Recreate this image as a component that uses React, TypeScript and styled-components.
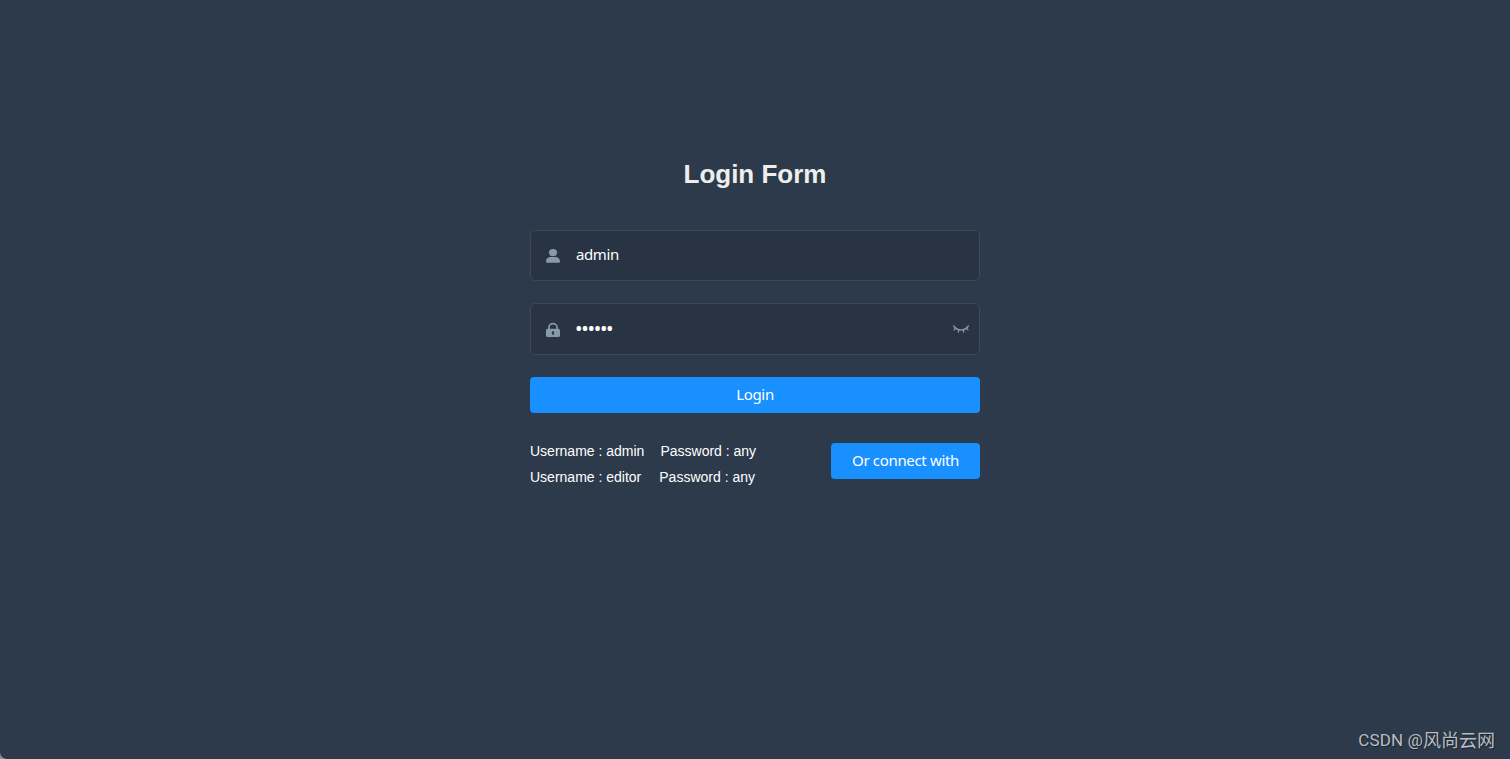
import { useState } from "react";
import styled, { createGlobalStyle } from "styled-components";

const bg = "#2d3a4b";
const iconGray = "#889aa4";
const primary = "#1890ff";
const uiFont = `"Noto Sans", "Open Sans", sans-serif`;

const GlobalStyle = createGlobalStyle`
  * { box-sizing: border-box; }
  body {
    margin: 0;
    background: linear-gradient(90deg, #8793a2 50%, #173a7c 50%);
    font-family: "Liberation Sans", Arial, sans-serif;
  }
`;

const Page = styled.div`
  position: relative;
  min-height: 100vh;
  overflow: hidden;
  background: ${bg};
  border-radius: 0 0 7px 7px;
`;

const LoginForm = styled.form`
  width: 450px;
  margin: 0 auto;
  padding-top: 159px;
`;

const Title = styled.h3`
  margin: 0 0 41px;
  color: #eee;
  font-size: 26px;
  line-height: 30px;
  font-weight: bold;
  text-align: center;
`;

const Field = styled.div<{ $height: number }>`
  display: flex;
  align-items: center;
  height: ${({ $height }) => $height}px;
  margin-bottom: 22px;
  padding: 0 10px 0 15px;
  border: 1px solid #3e4957;
  border-radius: 5px;
  background: #283443;

  svg { flex: none; display: block; }
`;

const Input = styled.input<{ $secret?: boolean }>`
  flex: 1;
  min-width: 0;
  height: 47px;
  margin-bottom: ${({ $secret }) => ($secret ? "1px" : "3px")};
  padding: 0 0 0 ${({ $secret }) => ($secret ? "15px" : "16px")};
  border: 0;
  outline: 0;
  background: transparent;
  color: #fff;
  font-family: ${uiFont};
  font-size: ${({ $secret }) => ($secret ? "20px" : "15px")};
  letter-spacing: ${({ $secret }) => ($secret ? "-1.3px" : "-0.4px")};
`;

const EyeButton = styled.button`
  padding: 0;
  border: 0;
  background: none;
  cursor: pointer;
`;

const Button = styled.button<{ $width: string }>`
  display: block;
  width: ${({ $width }) => $width};
  height: 36px;
  padding: 0 0 2px;
  border: 0;
  border-radius: 4px;
  background: ${primary};
  color: #fff;
  font-family: ${uiFont};
  font-size: 15px;
  line-height: 20px;
  letter-spacing: -0.33px;
  cursor: pointer;
`;

const Footer = styled.div`
  display: flex;
  justify-content: space-between;
  margin-top: 30px;
`;

const Tips = styled.div`
  color: #fff;
  font-size: 14px;
  line-height: 16px;
`;

const Tip = styled.div<{ $gap: number }>`
  display: flex;
  gap: ${({ $gap }) => $gap}px;
  margin-bottom: 10px;
`;

const Watermark = styled.div`
  position: absolute;
  right: 15px;
  bottom: 6px;
  display: flex;
  color: #b9bdc3;
  font-family: Roboto, "Noto Sans CJK SC", sans-serif;
  font-size: 17px;
  line-height: 26px;
  letter-spacing: 0.15px;
  white-space: nowrap;
  text-shadow: 1px 1px 1px rgba(0, 0, 0, 0.4);

  span {
    padding-top: 1px;
    font-size: 18px;
    letter-spacing: 0;
    line-height: 25px;
  }
`;

const UserIcon = () => (
  <svg width="14" height="14" viewBox="0 0 14 14" fill={iconGray}>
    <ellipse cx="7" cy="3.6" rx="4.1" ry="3.6" />
    <path d="M0 12.2C0 9.8 2 8 4.6 8h4.8C12 8 14 9.8 14 12.2c0 1-.6 1.6-1.6 1.6H1.6C.6 13.8 0 13.2 0 12.2z" />
  </svg>
);

const LockIcon = () => (
  <svg width="14" height="16" viewBox="0 -2 14 16">
    <path d="M2.9 6.5V4.6a4.1 3.9 0 0 1 8.2 0v1.9" fill="none" stroke={iconGray} strokeWidth="1.7" />
    <rect y="5.8" width="14" height="8.2" rx="1.6" fill={iconGray} />
    <path d="M7 8.2a1.3 1.3 0 0 1 .7 2.4v1.3H6.3v-1.3A1.3 1.3 0 0 1 7 8.2z" fill="#283443" />
  </svg>
);

const ClosedEye = () => (
  <svg width="16" height="9" viewBox="0 0 16 9" fill="none" stroke={iconGray} strokeWidth="1.3" strokeLinecap="round">
    <path d="M.6 1C2.4 3.5 5 4.9 8 4.9s5.6-1.4 7.4-3.9" />
    <path d="M2.6 3.1 1.1 4.900M5.9 4.7 5.3 7.200M10.1 4.7l.6 2.500M13.4 3.1l1.5 1.8" />
  </svg>
);

const App = () => {
  const [visible, setVisible] = useState(false);

  return (
    <>
      <GlobalStyle />
      <Page>
        <LoginForm onSubmit={(e) => e.preventDefault()}>
          <Title>Login Form</Title>
          <Field $height={51}>
            <UserIcon />
            <Input defaultValue="admin" aria-label="Username" spellCheck={false} />
          </Field>
          <Field $height={52}>
            <LockIcon />
            <Input $secret={!visible} type={visible ? "text" : "password"} defaultValue="111111" aria-label="Password" />
            <EyeButton type="button" aria-label="Show password" onClick={() => setVisible(!visible)}>
              <ClosedEye />
            </EyeButton>
          </Field>
          <Button $width="100%">Login</Button>
          <Footer>
            <Tips>
              <Tip $gap={16}>
                <span>Username : admin</span>
                <span>Password : any</span>
              </Tip>
              <Tip $gap={18}>
                <span>Username : editor</span>
                <span>Password : any</span>
              </Tip>
            </Tips>
            <Button type="button" $width="149px">Or connect with</Button>
          </Footer>
        </LoginForm>
        <Watermark>CSDN @<span>风尚云网</span></Watermark>
      </Page>
    </>
  );
};

export default App;
